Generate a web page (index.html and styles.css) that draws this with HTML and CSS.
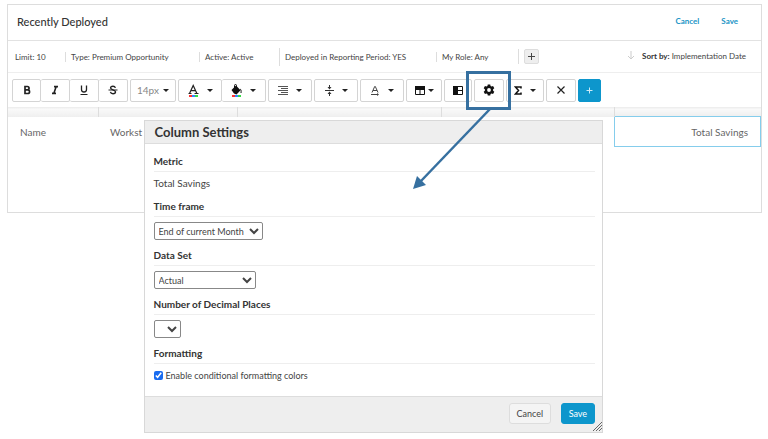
FILE: index.html
```html
<!DOCTYPE html>
<html lang="en">
<head>
<meta charset="UTF-8">
<meta name="viewport" content="width=device-width, initial-scale=1.0">
<title>Recently Deployed</title>
<link rel="stylesheet" href="styles.css">
</head>
<body>
<div class="panel">
    <div class="panel-header">
        <h1>Recently Deployed</h1>
        <div class="panel-links">
            <a href="#">Cancel</a>
            <a href="#">Save</a>
        </div>
    </div>

    <div class="filters">
        <span class="filter limit">Limit: 10</span>
        <span class="filter type">Type: Premium Opportunity</span>
        <span class="filter active">Active: Active</span>
        <span class="filter period">Deployed in Reporting Period: YES</span>
        <span class="filter role">My Role: Any</span>
        <span class="filter"><button class="add-filter" aria-label="Add filter"><svg width="7" height="7" viewBox="0 0 7 7"><path d="M3.500 0v7M0 3.500h7" stroke="#444" fill="none"/></svg></button></span>
        <div class="sort">
            <svg width="8" height="9" viewBox="0 0 8 9"><path d="M4 0v8M1 5l3 3 3-3" stroke="#ccc" fill="none"/></svg>
            <span><b>Sort by:</b> Implementation Date</span>
        </div>
    </div>

    <div class="toolbar">
        <div class="group">
            <button class="btn" aria-label="Bold"><svg width="10" height="10" viewBox="0 0 10 10"><path d="M3 1.5h2.4a1.6 1.6 0 0 1 0 3.3H3zM3 4.8h2.7a1.8 1.8 0 0 1 0 3.7H3z" fill="none" stroke="#222" stroke-width="1.7"/></svg></button>
            <button class="btn" aria-label="Italic"><svg width="10" height="10" viewBox="0 0 10 10"><path d="M4 1.6h4M2 8.4h4M6.2 1.6L3.8 8.4" fill="none" stroke="#222" stroke-width="1.6"/></svg></button>
            <button class="btn" aria-label="Underline"><svg width="10" height="10" viewBox="0 0 10 10"><path d="M2.5 .5v4a2.5 2.5 0 0 0 5 0v-4" fill="none" stroke="#222" stroke-width="1.3"/><path d="M1.5 9.5h7" stroke="#222"/></svg></button>
            <button class="btn" aria-label="Strikethrough"><svg width="10" height="10" viewBox="0 0 10 10"><path d="M7.4 2.9C7 1.7 6 1.3 5 1.3c-1.500 0-2.400.8-2.400 1.800C2.600 5 7.500 4.600 7.500 6.800c0 1.200-1.100 1.900-2.500 1.900-1.300 0-2.300-.6-2.600-1.800" fill="none" stroke="#222" stroke-width="1.400"/><path d="M.5 5h9" stroke="#222"/></svg></button>
        </div>
        <button class="btn size">14px <i class="caret"></i></button>
        <div class="group">
            <button class="btn wide" aria-label="Text color"><svg width="11" height="13" viewBox="0 0 11 13"><path d="M1.500 9.500L5.200 1.500l3.700 8M3 6.700h4.500" fill="none" stroke="#222" stroke-width="1.200"/><path d="M.5 9.500h3M6.500 9.500h4" stroke="#222"/><path d="M1 12h3" stroke="#f33" stroke-width="2"/><path d="M4 12h3" stroke="#38f" stroke-width="2"/><path d="M7 12h3" stroke="#3d4" stroke-width="2"/></svg><i class="caret"></i></button>
            <button class="btn wide" aria-label="Fill color"><svg width="11" height="13" viewBox="0 0 11 13"><path d="M.5 6l4.500-4.500 4.500 4.700L5.500 10.500 3 9.500z" fill="#111"/><path d="M3.500 4V1.500a1 1 0 0 1 2 0V4M9 5c1.200.5 1.300 2 1 4" fill="none" stroke="#111"/><path d="M1 12h3" stroke="#f33" stroke-width="2"/><path d="M4 12h3" stroke="#38f" stroke-width="2"/><path d="M7 12h3" stroke="#3d4" stroke-width="2"/></svg><i class="caret"></i></button>
        </div>
        <button class="btn wide" aria-label="Align"><svg width="10" height="11" viewBox="0 0 10 11"><path d="M0 1.500h10M3 3.500h7M0 5.500h10M3 7.500h7M0 9.500h10" stroke="#555"/></svg><i class="caret"></i></button>
        <button class="btn wide" aria-label="Vertical align"><svg width="9" height="11" viewBox="0 0 9 11"><path d="M0 5.500h9M4.500 0v3M4.500 8v3" stroke="#333"/><path d="M2.500 2h4l-2 2.500zM2.500 9h4l-2-2.500z" fill="#333"/></svg><i class="caret"></i></button>
        <button class="btn wide" aria-label="Text wrap"><svg width="10" height="11" viewBox="0 0 10 11"><path d="M2 7.500l2.700-6h.6l2.700 6M3 5.500h4" fill="none" stroke="#444"/><path d="M1 9.500h7" stroke="#444"/><path d="M7 8l2 1.500L7 11z" fill="#444"/></svg><i class="caret"></i></button>
        <button class="btn rows" aria-label="Rows"><svg width="10" height="9" viewBox="0 0 10 9"><path d="M.5.500h9v8h-9zM5 3v6" fill="none" stroke="#111"/><path d="M0 0h10v4H0z" fill="#111"/></svg><i class="caret"></i></button>
        <button class="btn columns" aria-label="Columns"><svg width="10" height="9" viewBox="0 0 10 9"><path d="M.5.500h9v8h-9zM4 4.500h6" fill="none" stroke="#111"/><path d="M0 0h5v9H0z" fill="#111"/></svg></button>
        <div class="gear">
            <button class="btn" aria-label="Column settings"><svg width="12" height="12" viewBox="0 0 24 24"><path fill="#111" fill-rule="evenodd" d="M9.500 1h5l.6 3.100 2 1.100 3-1 2.500 4.300-2.400 2.100v2.800l2.400 2.100-2.500 4.300-3-1-2 1.100-.6 3.100h-5l-.6-3.100-2-1.100-3 1-2.500-4.300 2.400-2.100v-2.800L1.400 8.500l2.500-4.300 3 1 2-1.100zM12 8.200a3.800 3.800 0 1 0 0 7.600 3.800 3.800 0 0 0 0-7.600z"/></svg></button>
            <svg class="callout" width="98" height="120" viewBox="0 0 98 120"><rect x="54.500" y="1.500" width="42" height="36" fill="none" stroke="#3670a0" stroke-width="3"/><path d="M77 38L8 110" stroke="#3670a0" stroke-width="2.500"/><path d="M0 118l4-13 9 9z" fill="#3670a0"/></svg>
        </div>
        <button class="btn sum" aria-label="Summary"><svg width="8" height="9" viewBox="0 0 8 9"><path d="M7 2.500V1H1.500l3 3.500-3 3.500H7V6.500" fill="none" stroke="#111" stroke-width="1.500"/></svg><i class="caret"></i></button>
        <button class="btn" aria-label="Remove"><svg width="8" height="8" viewBox="0 0 8 8"><path d="M.5.500l7 7M7.500.500l-7 7" stroke="#222" stroke-width="1.200"/></svg></button>
        <button class="btn add" aria-label="Add column"><svg width="7" height="7" viewBox="0 0 7 7"><path d="M3.500.500v6M.5 3.500h6" stroke="#cdeaf6"/></svg></button>
    </div>

    <table class="grid">
        <colgroup>
            <col class="c-name"><col class="c-work"><col class="c-wide"><col><col class="c-total">
        </colgroup>
        <tbody>
            <tr class="handles"><td></td><td></td><td></td><td></td><td></td></tr>
            <tr class="titles">
                <th>Name</th>
                <th>Workst</th>
                <th></th>
                <th></th>
                <th class="selected">Total Savings</th>
            </tr>
        </tbody>
    </table>

    <form class="dialog">
        <h2>Column Settings</h2>
        <div class="dialog-body">
            <h3>Metric</h3>
            <p>Total Savings</p>
            <h3><label for="timeframe">Time frame</label></h3>
            <select id="timeframe" class="timeframe"><option>End of current Month</option></select>
            <h3><label for="dataset">Data Set</label></h3>
            <select id="dataset" class="dataset"><option>Actual</option></select>
            <h3><label for="decimals">Number of Decimal Places</label></h3>
            <select id="decimals" class="decimals"><option></option></select>
            <h3>Formatting</h3>
            <div class="check">
                <input type="checkbox" id="colors" checked>
                <label for="colors">Enable conditional formatting colors</label>
            </div>
        </div>
        <div class="dialog-footer">
            <button type="button" class="cancel">Cancel</button>
            <button type="button" class="save">Save</button>
            <svg class="grip" width="9" height="9" viewBox="0 0 9 9"><path d="M0 9l9-9M3 9l6-6M6 9l3-3" stroke="#666"/></svg>
        </div>
    </form>
</div>
</body>
</html>
```

FILE: styles.css
```css
* {
    box-sizing: border-box;
}
body {
    min-height: 100vh;
    margin: 0;
    padding: 4px 6px 0 7px;
    background: #fff;
    color: #444;
    font-family: Lato, "Open Sans", sans-serif;
    font-size: 10px;
}
h1, h2, h3, p {
    margin: 0;
}
button, select {
    font-family: inherit;
}
svg {
    display: block;
    flex: none;
}
.panel {
    position: relative;
    min-height: 209px;
    border: 1px solid #ddd;
}
.panel-header {
    display: flex;
    align-items: center;
    justify-content: space-between;
    height: 36px;
    padding: 0 23px 3px 9px;
    border-bottom: 1px solid #e2e2e2;
}
.panel-header h1 {
    font-size: 11px;
    font-weight: 500;
    color: #333;
}
.panel-links {
    display: flex;
    gap: 22px;
}
.panel-links a {
    color: #1a94c6;
    font-size: 8px;
    font-weight: bold;
    text-decoration: none;
}

/* filters */
.filters {
    display: flex;
    align-items: center;
    height: 32px;
    padding: 0 15px 0 7px;
    border-bottom: 1px solid #eee;
    font-size: 8px;
    white-space: nowrap;
}
.filter + .filter {
    padding-left: 5px;
    border-left: 1px solid #ddd;
    line-height: 10px;
}
.limit {
    width: 50px;
}
.filter.type {
    width: 134px;
}
.filter.active {
    width: 80px;
}
.filter.period {
    width: 157px;
    line-height: 18px;
}
.filter.role {
    width: 82px;
}
.add-filter {
    display: flex;
    align-items: center;
    justify-content: center;
    width: 15px;
    height: 15px;
    padding: 0;
    border: 1px solid #ddd;
    border-radius: 2px;
    background: #eee;
}
.sort {
    display: flex;
    align-items: center;
    gap: 7px;
    margin-left: auto;
    padding-bottom: 2px;
}
.sort b {
    color: #333;
}

/* toolbar */
.toolbar {
    display: flex;
    align-items: center;
    gap: 2px;
    height: 34px;
    padding: 0 4px;
}
.group {
    display: flex;
}
.btn {
    display: flex;
    align-items: center;
    justify-content: center;
    gap: 8px;
    width: 30px;
    height: 23px;
    padding: 0;
    border: 1px solid #d4d4d4;
    border-radius: 2px;
    background: #fff;
    color: #888;
}
.group .btn {
    width: 29px;
}
.group .btn + .btn {
    border-left: 0;
}
.btn.size {
    gap: 4px;
    width: 46px;
    font-size: 10px;
}
.btn.wide, .group .btn.wide {
    width: 44px;
}
.btn.rows {
    gap: 3px;
    width: 36px;
}
.btn.columns {
    width: 28px;
}
.btn.sum {
    width: 38px;
}
.btn.add {
    width: 23px;
    border-color: #0d96cc;
    background: #0d96cc;
}
.caret {
    border: 3px solid transparent;
    border-top-color: #222;
    border-bottom: 0;
}
.gear {
    position: relative;
}
.callout {
    position: absolute;
    top: -8px;
    right: -7px;
    z-index: 2;
    pointer-events: none;
}

/* grid */
.grid {
    width: 100%;
    border-collapse: collapse;
    table-layout: fixed;
}
.c-name {
    width: 90px;
}
.c-work {
    width: 139px;
}
.c-wide {
    width: 204px;
}
.c-total {
    width: 146px;
}
.handles td {
    height: 9px;
    padding: 0;
    border-top: 1px solid #eee;
    border-right: 1px solid #ddd;
    background: linear-gradient(#fafafa, #eee);
}
.handles td:last-child {
    border-right: 0;
}
.titles th {
    height: 30px;
    padding: 0 12px;
    color: #666;
    font-size: 10px;
    font-weight: normal;
    text-align: left;
}
.titles .selected {
    border: 1px solid #85cdec;
    text-align: right;
}

/* dialog */
.dialog {
    position: absolute;
    top: 115px;
    left: 18%;
    width: 61%;
    border: 1px solid #d8d8d8;
    background: #fff;
}
.dialog h2 {
    padding: 0 10px;
    border-bottom: 1px solid #ddd;
    background: #eee;
    color: #333;
    font-size: 13px;
    line-height: 22px;
}
.dialog-body {
    padding: 7px 7px 14px 9px;
}
.dialog h3 {
    margin-bottom: 5px;
    border-bottom: 1px solid #eee;
    color: #333;
    font-size: 10px;
    line-height: 20px;
}
.dialog p {
    margin-bottom: 6px;
    line-height: 13px;
}
.dialog select {
    display: block;
    height: 18px;
    margin-bottom: 5px;
    padding: 0;
    border: 1px solid #888;
    border-radius: 2px;
    background: #fff;
    color: #444;
    font-size: 9px;
}
.timeframe {
    width: 109px;
}
.dataset {
    width: 102px;
}
.decimals {
    width: 27px;
}
.check {
    display: flex;
    align-items: center;
    gap: 3px;
    font-size: 9px;
    line-height: 13px;
}
.check input {
    width: 9px;
    height: 9px;
    margin: 0;
    accent-color: #1a6cf0;
}
.dialog-footer {
    position: relative;
    display: flex;
    align-items: center;
    justify-content: flex-end;
    gap: 10px;
    height: 36px;
    padding: 0 7px 2px;
    border-top: 1px solid #ddd;
    background: #eee;
}
.dialog-footer button {
    height: 21px;
    padding: 0;
    border: 1px solid #ddd;
    border-radius: 3px;
    font-size: 9px;
}
.dialog-footer .cancel {
    width: 42px;
    background: #f4f4f4;
    color: #444;
}
.dialog-footer .save {
    width: 34px;
    border-color: #0d96cc;
    background: #0d96cc;
    color: #fff;
}
.grip {
    position: absolute;
    right: 0;
    bottom: 1px;
}
```
